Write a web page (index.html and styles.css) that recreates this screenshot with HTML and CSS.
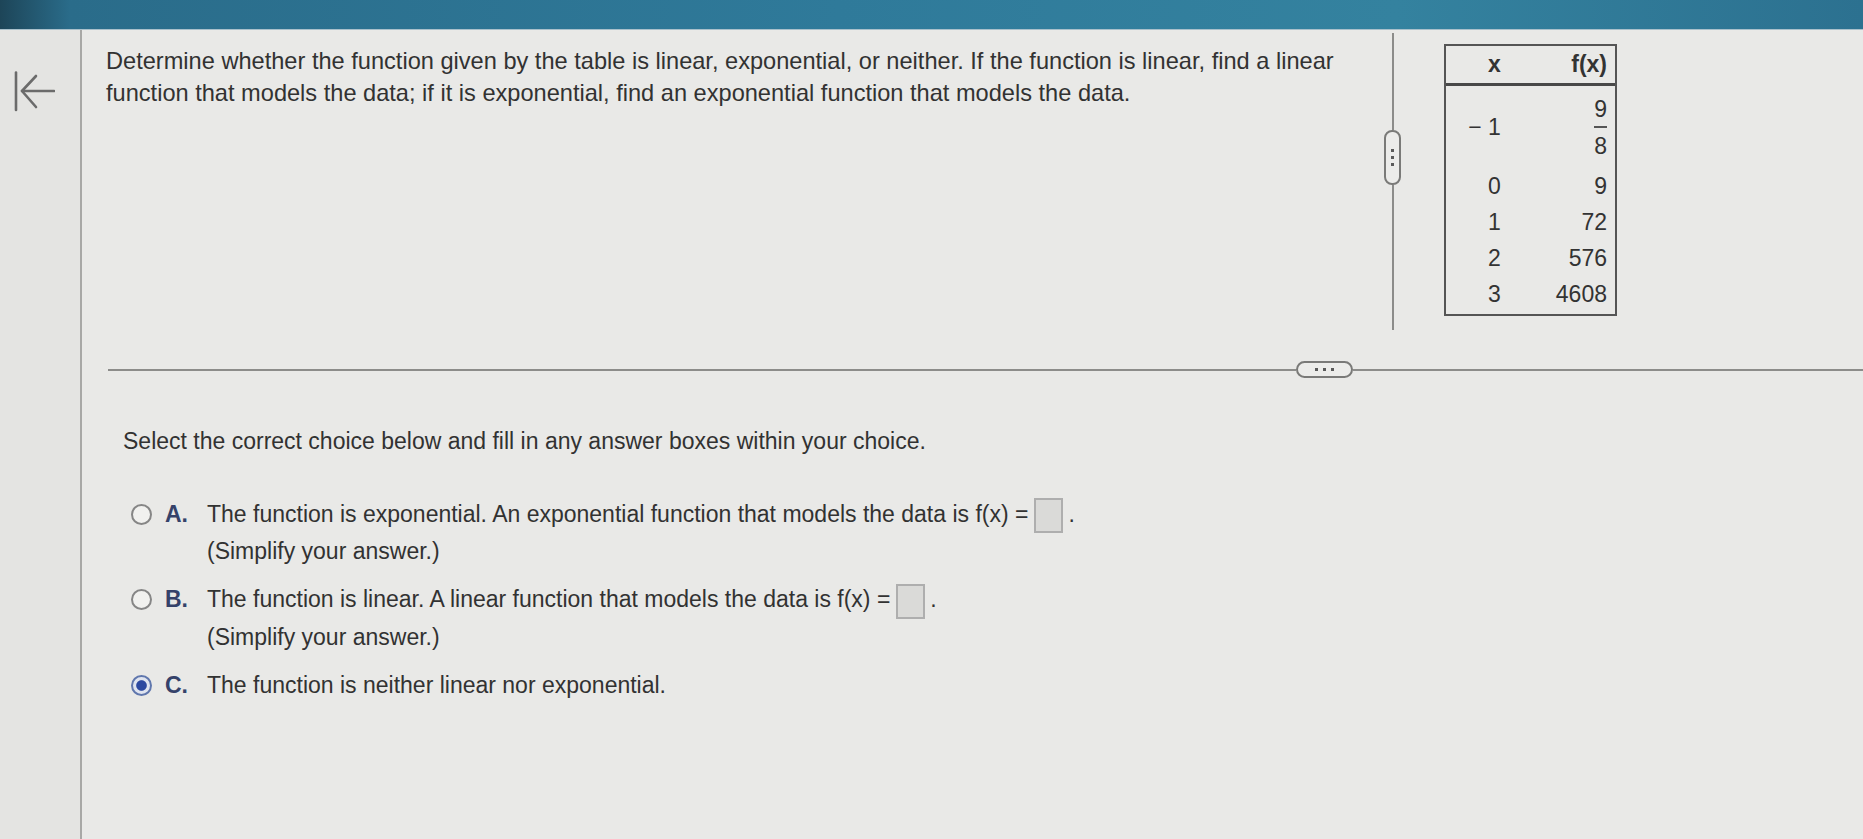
FILE: index.html
```html
<!DOCTYPE html>
<html lang="en">
<head>
<meta charset="utf-8">
<title>Question</title>
<link rel="stylesheet" href="styles.css">
</head>
<body>
<div class="topbar"></div>
<div class="page">
  <aside class="sidebar">
    <svg class="back" width="42" height="42" viewBox="0 0 42 42" fill="none" stroke="#6b6b6b" stroke-width="2.6" stroke-linecap="round" stroke-linejoin="round">
      <path d="M3 1.5 V39"/>
      <path d="M9 20 H41"/>
      <path d="M23 5 L9 20 L23 36"/>
    </svg>
  </aside>
  <main class="content">
    <section class="top">
      <div class="question">
        <p>Determine whether the function given by the table is linear, exponential, or neither. If the function is linear, find a linear function that models the data; if it is exponential, find an exponential function that models the data.</p>
      </div>
      <div class="vsplit">
        <span class="vline vline-top"></span>
        <span class="vpill"><i></i><i></i><i></i></span>
        <span class="vline vline-bottom"></span>
      </div>
      <table class="fxtable">
        <thead>
          <tr><th class="cx">x</th><th class="cf">f(x)</th></tr>
        </thead>
        <tbody>
          <tr class="frow">
            <td class="cx neg">&minus; 1</td>
            <td class="cf"><span class="frac"><span class="num">9</span><span class="den">8</span></span></td>
          </tr>
          <tr><td class="cx">0</td><td class="cf">9</td></tr>
          <tr><td class="cx">1</td><td class="cf">72</td></tr>
          <tr><td class="cx">2</td><td class="cf">576</td></tr>
          <tr class="last"><td class="cx">3</td><td class="cf">4608</td></tr>
        </tbody>
      </table>
    </section>

    <div class="hsplit">
      <span class="hline hline-left"></span>
      <span class="hpill"><i></i><i></i><i></i></span>
      <span class="hline hline-right"></span>
    </div>

    <section class="answers">
      <p class="instr">Select the correct choice below and fill in any answer boxes within your choice.</p>
      <div class="choices">
        <div class="choice">
          <span class="radio"></span>
          <span class="letter">A.</span>
          <div class="ctext">
            <p>The function is exponential. An exponential function that models the data is f(x) =<span class="box"></span>.</p>
            <p>(Simplify your answer.)</p>
          </div>
        </div>
        <div class="choice">
          <span class="radio"></span>
          <span class="letter">B.</span>
          <div class="ctext">
            <p>The function is linear. A linear function that models the data is f(x) =<span class="box"></span>.</p>
            <p>(Simplify your answer.)</p>
          </div>
        </div>
        <div class="choice">
          <span class="radio on"></span>
          <span class="letter">C.</span>
          <div class="ctext">
            <p>The function is neither linear nor exponential.</p>
          </div>
        </div>
      </div>
    </section>
  </main>
</div>
</body>
</html>
```

FILE: styles.css
```css
* { box-sizing: border-box; }

html, body { margin: 0; padding: 0; }

body {
  width: 1863px;
  height: 839px;
  overflow: hidden;
  background: #e8e8e6;
  font-family: "Liberation Sans", Arial, Helvetica, sans-serif;
  color: #333333;
}

.topbar {
  height: 30px;
  background: linear-gradient(90deg, #1d4558 0, #2a6c8a 70px, #2f7a9a 45%, #34829f 75%, #2c7190 100%);
  border-bottom: 1px solid #a9c0cb;
}

.page {
  display: flex;
  height: 809px;
}

.sidebar {
  width: 82px;
  flex: none;
  background: #e4e4e2;
  border-right: 2px solid #a8a8a6;
  padding: 41px 0 0 13px;
}

.back { display: block; }

.content {
  flex: 1;
  display: flex;
  flex-direction: column;
  background: #e9e9e7;
}

/* ---------- top: question + table ---------- */
.top {
  display: flex;
  align-items: flex-start;
}

.question {
  width: 1250px;
  margin: 15px 0 0 24px;
  font-size: 23.6px;
  line-height: 32px;
  color: #323232;
}

.question p { margin: 0; }

.vsplit {
  width: 17px;
  height: 297px;
  margin: 3px 0 0 28px;
  display: flex;
  flex-direction: column;
  align-items: center;
}

.vline {
  width: 2px;
  background: #8c8c8a;
}

.vline-top { height: 97px; }
.vline-bottom { flex: 1; }

.vpill {
  width: 17px;
  height: 55px;
  flex: none;
  border: 2px solid #7a7a78;
  border-radius: 8px;
  background: #ececea;
  display: flex;
  flex-direction: column;
  align-items: center;
  justify-content: center;
  gap: 4px;
}

.vpill i, .hpill i {
  display: block;
  width: 3px;
  height: 3px;
  background: #5a5a5a;
}

.fxtable {
  margin: 14px 0 0 43px;
  border: 2px solid #555555;
  border-spacing: 0;
  font-size: 23px;
  color: #333333;
}

.fxtable th {
  height: 40px;
  padding: 0;
  font-weight: bold;
  border-bottom: 3px solid #484848;
  vertical-align: middle;
}

.fxtable td {
  height: 36px;
  padding: 0;
  vertical-align: middle;
  line-height: 26px;
}

.cx { width: 97px; text-align: center; }
.cf { width: 72px; text-align: right; padding-right: 8px !important; }

.fxtable .frow td { height: 82px; }
.neg { padding-right: 20px !important; }

.fxtable .last td { height: 38px; padding-bottom: 2px; }

.frac {
  display: inline-flex;
  flex-direction: column;
  align-items: flex-end;
  vertical-align: middle;
}

.num, .den {
  display: block;
  line-height: 22px;
}

.num {
  padding: 0 0 6px;
  border-bottom: 2px solid #555555;
}

.den { padding-top: 7px; }

/* ---------- horizontal divider ---------- */
.hsplit {
  display: flex;
  align-items: center;
  margin: 31px 0 0 26px;
}

.hline {
  height: 2px;
  background: #8c8c8a;
}

.hline-left { width: 1188px; flex: none; }
.hline-right { flex: 1; }

.hpill {
  width: 57px;
  height: 17px;
  flex: none;
  border: 2px solid #7a7a78;
  border-radius: 9px;
  background: #ececea;
  display: flex;
  align-items: center;
  justify-content: center;
  gap: 5px;
}

/* ---------- answers ---------- */
.answers {
  padding-left: 41px;
  font-size: 23px;
  color: #323232;
}

.instr {
  margin: 48px 0 0;
  line-height: 31px;
}

.choices {
  margin: 39px 0 0 8px;
  display: flex;
  flex-direction: column;
  gap: 12px;
}

.choice {
  display: flex;
  align-items: flex-start;
  line-height: 36px;
}

.radio {
  width: 21px;
  height: 21px;
  flex: none;
  margin-top: 8px;
  border: 2px solid #868686;
  border-radius: 50%;
  background: #f1f1ef;
}

.radio.on {
  border-color: #6077ad;
  background: radial-gradient(circle, #2c49a0 0 4.8px, #dfe4f0 5.8px);
}

.letter {
  width: 42px;
  margin-left: 13px;
  flex: none;
  font-weight: bold;
  color: #35426a;
}

.ctext p { margin: 0; }

.box {
  display: inline-block;
  width: 29px;
  height: 35px;
  margin: 0 5px 0 6px;
  vertical-align: middle;
  border: 2px solid #aeaeae;
  background: #dadad8;
}
```
